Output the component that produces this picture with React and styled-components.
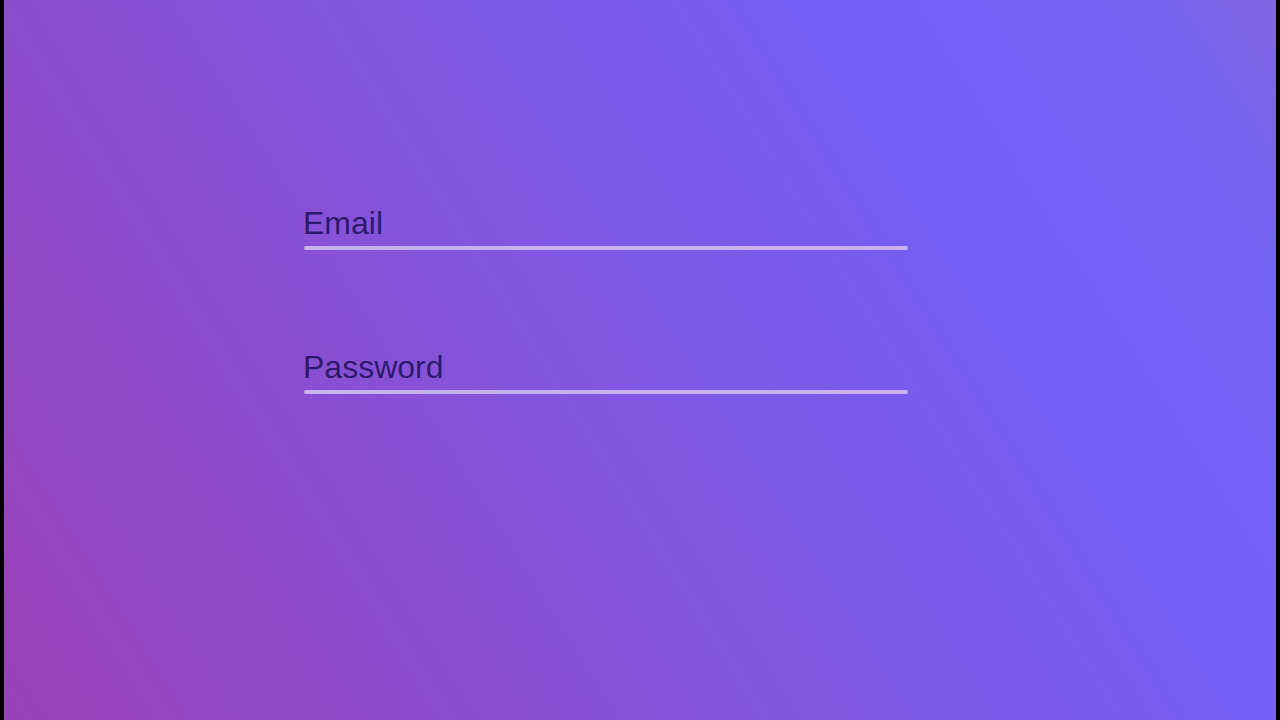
import React from 'react';
import styled, { createGlobalStyle } from 'styled-components';

const GlobalStyle = createGlobalStyle`
    html, body {
        margin: 0;
        padding: 0;
        background: #000;
        font-family: "Liberation Sans", Arial, sans-serif;
    }
`

const Frame = styled.div`
    display: flex;
    width: 1280px;
    height: 720px;
    padding: 0 4px;
    box-sizing: border-box;
    background: #000;
`

const Backdrop = styled.div`
    flex: 1;
    display: flex;
    flex-direction: column;
    padding: 204px 0 0 299px;
    background: linear-gradient(58deg, #9a42b8 0%, #8a4fd2 30%, #7b5ae6 55%, #745ff6 75%, #7563f4 90%, #7f66e2 100%);
`

const Form = styled.form`
    display: flex;
    flex-direction: column;
    gap: 98px;
    width: 605px;
`

const Field = styled.label`
    display: flex;
    flex-direction: column;
    gap: 4px;
`

const Input = styled.input`
    border: none;
    outline: none;
    background: transparent;
    font-family: "Liberation Sans", Arial, sans-serif;
    font-size: 32px;
    color: #2a1763;
    padding: 0;
    height: 38px;

    &::placeholder {
        color: rgba(36, 20, 96, 0.92);
        opacity: 1;
    }
`

const Underline = styled.span`
    display: block;
    height: 4px;
    margin-left: 1px;
    border-radius: 2px;
    background: #c8b2f2;
`

const App = () => {
    return (
        <>
            <GlobalStyle />
            <Frame>
                <Backdrop>
                    <Form onSubmit={e => e.preventDefault()}>
                        <Field>
                            <Input type="email" placeholder="Email" />
                            <Underline />
                        </Field>
                        <Field>
                            <Input type="password" placeholder="Password" />
                            <Underline />
                        </Field>
                    </Form>
                </Backdrop>
            </Frame>
        </>
    )
}

export default App;
